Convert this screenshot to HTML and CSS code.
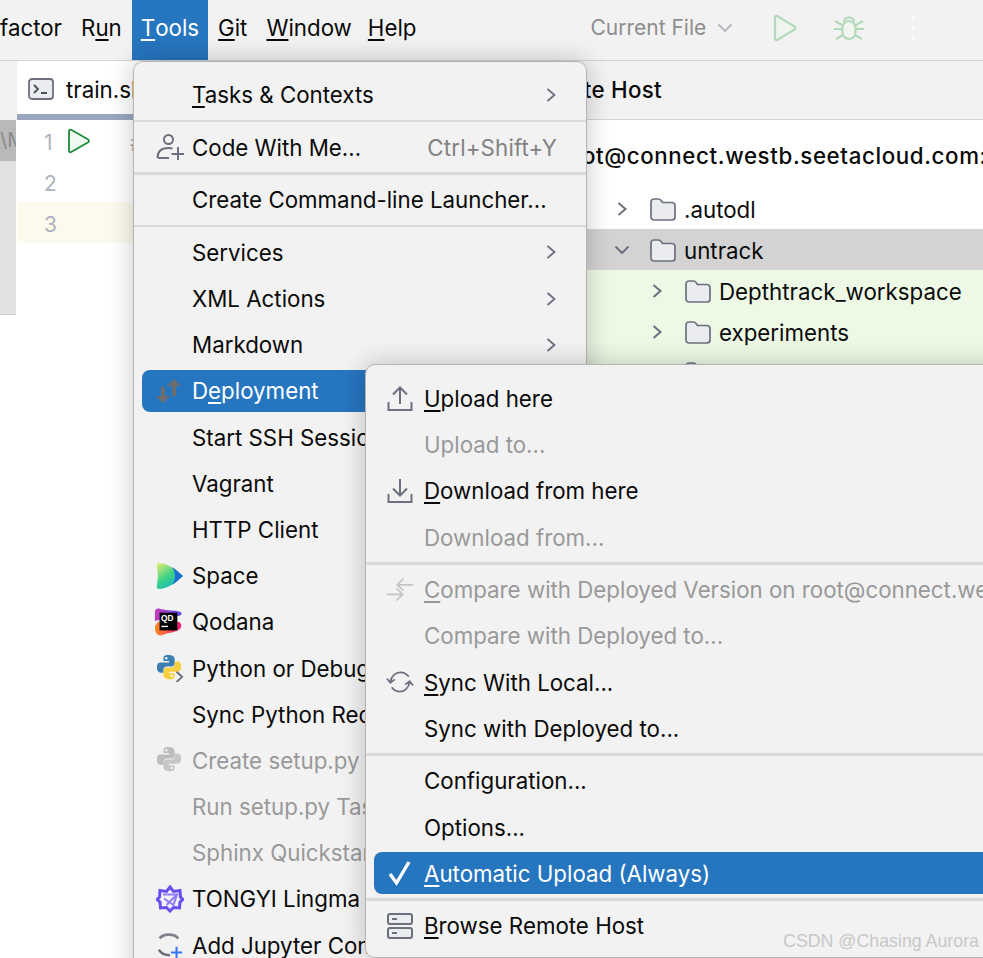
FILE: index.html
```html
<!DOCTYPE html>
<html lang="en">
<head>
<meta charset="utf-8">
<title>Tools menu</title>
<link rel="stylesheet" href="styles.css">
</head>
<body>
<div class="screen">
  <header class="menubar">
    <span class="mb-item mb-first">factor</span>
    <span class="mb-item">R<u>u</u>n</span>
    <span class="mb-item mb-active"><u>T</u>ools</span>
    <span class="mb-item mb-git"><u>G</u>it</span>
    <span class="mb-item"><u>W</u>indow</span>
    <span class="mb-item mb-help"><u>H</u>elp</span>
    <div class="toolbar">
      <span class="run-config">Current File</span>
      <svg class="tb-chev" viewBox="0 0 16 10"><path d="M1.500 1.500 8 8l6.500-6.500" fill="none" stroke="#b4b6bc" stroke-width="1.800"/></svg>
      <svg class="tb-run" viewBox="0 0 26 28"><path d="M3 3.500c0-1.500 1.300-2 2.500-1.300l17 10.300c1.200.8 1.200 2.200 0 3l-17 10.300c-1.200.7-2.500.2-2.500-1.300z" fill="#f0f6ee" stroke="#b3d9b9" stroke-width="2.200"/></svg>
      <svg class="tb-bug" viewBox="0 0 30 28"><g fill="none" stroke="#b3d9b9" stroke-width="2.200"><rect x="8.500" y="7" width="13" height="18" rx="6.500" fill="#f0f6ee"/><path d="M10 8c0-6 10-6 10 0M1 7l7 4M29 7l-7 4M0 15h8M30 15h-8M2 25l7-4M28 25l-7-4"/></g></svg>
      <svg class="tb-more" viewBox="0 0 6 26"><g fill="#fbfbfb"><circle cx="3" cy="3" r="2"/><circle cx="3" cy="13" r="2"/><circle cx="3" cy="23" r="2"/></g></svg>
    </div>
  </header>

  <main class="workspace">
    <aside class="stripe">
      <div class="stripe-top"></div>
      <div class="stripe-path">\M</div>
      <div class="stripe-body"></div>
    </aside>

    <section class="editor">
      <div class="tabbar">
        <div class="tab">
          <svg class="tab-icon" viewBox="0 0 26 22"><rect x="1" y="1" width="24" height="20" rx="3" fill="#ebecf0" stroke="#6c707e" stroke-width="1.800"/><path d="M6 7l4 4-4 4M13 15h6" fill="none" stroke="#4a4e5a" stroke-width="1.800"/></svg>
          <span>train.sh</span>
        </div>
      </div>
      <div class="code">
        <div class="line"><span class="ln">1</span><svg class="gutter-run" viewBox="0 0 24 26"><path d="M2 3c0-1.300 1.200-1.800 2.200-1.200l17 9.700c1 .6 1 2.200 0 2.800l-17 9.700C3.200 24.600 2 24.100 2 22.800z" fill="#effaf0" stroke="#208a3c" stroke-width="1.800"/></svg><span class="code-text">#</span></div>
        <div class="line"><span class="ln">2</span></div>
        <div class="line line-current"><span class="ln">3</span></div>
      </div>
    </section>

    <section class="remote">
      <div class="remote-title">Remote Host</div>
      <div class="remote-root">root@connect.westb.seetacloud.com:</div>
      <div class="tree">
        <div class="node">
          <svg class="chev" viewBox="0 0 12 16"><path d="M2.500 2l7 6-7 6" fill="none" stroke="#6c707e" stroke-width="2"/></svg>
          <svg class="folder" viewBox="0 0 26 24"><path d="M1 5a3 3 0 0 1 3-3h4.500c1.500 0 2 .8 2.800 1.800L12.500 5.500H22a3 3 0 0 1 3 3V20a3 3 0 0 1-3 3H4a3 3 0 0 1-3-3z" fill="#ebecf0" stroke="#6c707e" stroke-width="1.700"/></svg>
          <span>.autodl</span>
        </div>
        <div class="node node-selected">
          <svg class="chev" viewBox="0 0 16 12"><path d="M1.500 2.500l6.500 6.500 6.500-6.500" fill="none" stroke="#6c707e" stroke-width="2"/></svg>
          <svg class="folder" viewBox="0 0 26 24"><path d="M1 5a3 3 0 0 1 3-3h4.500c1.500 0 2 .8 2.800 1.800L12.500 5.500H22a3 3 0 0 1 3 3V20a3 3 0 0 1-3 3H4a3 3 0 0 1-3-3z" fill="#ebecf0" stroke="#6c707e" stroke-width="1.700"/></svg>
          <span>untrack</span>
        </div>
        <div class="node node-child">
          <svg class="chev" viewBox="0 0 12 16"><path d="M2.500 2l7 6-7 6" fill="none" stroke="#6c707e" stroke-width="2"/></svg>
          <svg class="folder" viewBox="0 0 26 24"><path d="M1 5a3 3 0 0 1 3-3h4.500c1.500 0 2 .8 2.800 1.800L12.500 5.500H22a3 3 0 0 1 3 3V20a3 3 0 0 1-3 3H4a3 3 0 0 1-3-3z" fill="#ebecf0" stroke="#6c707e" stroke-width="1.700"/></svg>
          <span>Depthtrack_workspace</span>
        </div>
        <div class="node node-child">
          <svg class="chev" viewBox="0 0 12 16"><path d="M2.500 2l7 6-7 6" fill="none" stroke="#6c707e" stroke-width="2"/></svg>
          <svg class="folder" viewBox="0 0 26 24"><path d="M1 5a3 3 0 0 1 3-3h4.500c1.500 0 2 .8 2.800 1.800L12.500 5.500H22a3 3 0 0 1 3 3V20a3 3 0 0 1-3 3H4a3 3 0 0 1-3-3z" fill="#ebecf0" stroke="#6c707e" stroke-width="1.700"/></svg>
          <span>experiments</span>
        </div>
        <div class="node node-child">
          <svg class="chev" viewBox="0 0 12 16"></svg>
          <svg class="folder" viewBox="0 0 26 24"><path d="M1 5a3 3 0 0 1 3-3h4.500c1.500 0 2 .8 2.800 1.800L12.500 5.500H22a3 3 0 0 1 3 3V20a3 3 0 0 1-3 3H4a3 3 0 0 1-3-3z" fill="#ebecf0" stroke="#6c707e" stroke-width="1.700"/></svg>
        </div>
      </div>
    </section>
  </main>

  <nav class="menu menu-main">
    <div class="row"><span class="ico"></span><span><u>T</u>asks &amp; Contexts</span><svg class="more" viewBox="0 0 12 16"><path d="M2.500 2l7 6-7 6" fill="none" stroke="#6c707e" stroke-width="1.800"/></svg></div>
    <div class="sep"></div>
    <div class="row"><span class="ico ico-in"><svg viewBox="0 0 28 28"><g fill="none" stroke="#6c707e" stroke-width="2"><circle cx="12.500" cy="6.500" r="4.500"/><path d="M1.500 25c0-6 3-10 11-10 1.500 0 3 .2 4 .6M2 25h11M22 14v13M15.500 21h12.500"/></g></svg></span><span>Code With Me...</span><span class="shortcut">Ctrl+Shift+Y</span></div>
    <div class="sep"></div>
    <div class="row"><span class="ico"></span><span>Create Command-line Launcher...</span></div>
    <div class="sep"></div>
    <div class="row"><span class="ico"></span><span>Services</span><svg class="more" viewBox="0 0 12 16"><path d="M2.500 2l7 6-7 6" fill="none" stroke="#6c707e" stroke-width="1.800"/></svg></div>
    <div class="row"><span class="ico"></span><span>XML Actions</span><svg class="more" viewBox="0 0 12 16"><path d="M2.500 2l7 6-7 6" fill="none" stroke="#6c707e" stroke-width="1.800"/></svg></div>
    <div class="row"><span class="ico"></span><span>Markdown</span><svg class="more" viewBox="0 0 12 16"><path d="M2.500 2l7 6-7 6" fill="none" stroke="#6c707e" stroke-width="1.800"/></svg></div>
    <div class="row row-sel"><span class="ico"><svg viewBox="0 0 28 28"><g fill="#6e6e6e"><path d="M7 10h4v9h5l-7 7-7-7h5z"/><path d="M18 2l7 7h-5v10h-4V9h-5z" transform="translate(2 0)"/></g></svg></span><span>D<u>e</u>ployment</span></div>
    <div class="row"><span class="ico"></span><span>Start SSH Session...</span></div>
    <div class="row"><span class="ico"></span><span>Vagrant</span></div>
    <div class="row"><span class="ico"></span><span>HTTP Client</span></div>
    <div class="row"><span class="ico ico-in"><svg viewBox="0 0 28 28"><defs><linearGradient id="sp" x1="0" y1="0" x2=".7" y2="1"><stop offset="0" stop-color="#e8ee70"/><stop offset=".55" stop-color="#39d08a"/><stop offset="1" stop-color="#12b5c9"/></linearGradient></defs><path d="M3 1c8 0 16 6 24 13-8 7-16 13-24 13-2 0-2.500-1-2-4 1-6 1-12 0-18-.5-3 0-4 2-4z" fill="url(#sp)"/><path d="M16 5c4 2.500 7.500 6 11 9-3.500 3-7 6.500-11 9 4-6 4-12 0-18z" fill="#1a6fd0"/></svg></span><span>Space</span></div>
    <div class="row"><span class="ico"><svg viewBox="0 0 30 30"><defs><linearGradient id="qa" x1="0" y1="0" x2="1" y2="0"><stop offset="0" stop-color="#c43ab8"/><stop offset="1" stop-color="#5b4de8"/></linearGradient><linearGradient id="qb" x1="0" y1="0" x2="1" y2="0"><stop offset="0" stop-color="#ff8a1f"/><stop offset="1" stop-color="#f0187f"/></linearGradient></defs><path d="M1 4c0-3 3-4 6-3 8 2 15 1 21 3 2 1 2 3 0 4L1 14z" fill="url(#qa)"/><path d="M1 22c0-4 2-7 6-8l20 1c3 2 3 6 0 8-6 4-12 3-18 6-5 2-8-3-8-7z" fill="url(#qb)"/><rect x="6" y="5" width="19" height="19" fill="#000"/><text class="qd" x="7.500" y="14">QD</text><rect x="8" y="19" width="7" height="1.500" fill="#fff"/></svg></span><span>Qodana</span></div>
    <div class="row"><span class="ico ico-in"><svg viewBox="0 0 30 30"><path d="M13 1C9 1 8 2.500 8 5v2.500h6V9H5c-3 0-4 2-4 5.500S2.500 20 5 20h3v-3c0-2 1.500-3.500 3.500-3.500h5c2 0 3.500-1.500 3.500-3.500V5c0-2.500-3-4-7-4z" fill="#3c7eb2"/><path d="M15 27c4 0 5-1.500 5-4v-2.500h-6V19h9c3 0 4-2 4-5.500S25.500 8 23 8h-3v3c0 2-1.500 3.500-3.500 3.500h-5C9.500 14.500 8 16 8 18v5c0 2.500 3 4 7 4z" fill="#f7cf3e"/><circle cx="11" cy="4.500" r="1.300" fill="#fff"/><circle cx="17" cy="23.500" r="1.300" fill="#fff"/><path d="M22 19l6 5.500-6 5.500" fill="none" stroke="#6c707e" stroke-width="2"/></svg></span><span>Python or Debug Console</span></div>
    <div class="row"><span class="ico"></span><span>Sync Python Requirements...</span></div>
    <div class="row row-off"><span class="ico ico-in"><svg viewBox="0 0 30 30"><path d="M13 1C9 1 8 2.500 8 5v2.500h6V9H5c-3 0-4 2-4 5.500S2.500 20 5 20h3v-3c0-2 1.500-3.500 3.500-3.500h5c2 0 3.500-1.500 3.500-3.500V5c0-2.500-3-4-7-4z" fill="#bdbdbd"/><path d="M15 27c4 0 5-1.500 5-4v-2.500h-6V19h9c3 0 4-2 4-5.500S25.500 8 23 8h-3v3c0 2-1.500 3.500-3.500 3.500h-5C9.500 14.500 8 16 8 18v5c0 2.500 3 4 7 4z" fill="#c6c6c6"/><circle cx="11" cy="4.500" r="1.300" fill="#f2f2f2"/><circle cx="17" cy="23.500" r="1.300" fill="#f2f2f2"/></svg></span><span>Create setup.py</span></div>
    <div class="row row-off"><span class="ico"></span><span>Run setup.py Task...</span></div>
    <div class="row row-off"><span class="ico"></span><span>Sphinx Quickstart</span></div>
    <div class="row"><span class="ico ico-in"><svg viewBox="0 0 28 28"><path d="M14 2l3.500 4.500 6.500-1 .5 6.500L27 14.500 24 17l-.5 6-6-.5-3.500 3.500-3.500-3.500-6 .5-.5-6L1 14.500 3.500 12 4 5.500l6.500 1z" fill="none" stroke="#6a4df0" stroke-width="3"/><path d="M7 9.500h14L10.500 20M21 9.500 17.500 20 8 13.500" fill="none" stroke="#8f7bff" stroke-width="2"/></svg></span><span>TONGYI Lingma</span></div>
    <div class="row"><span class="ico ico-in"><svg viewBox="0 0 30 30"><g fill="none" stroke-width="2.800"><path d="M4 8c3-5 15-6 20 0" stroke="#7d828e"/><path d="M3 20c3 5 8 6 12 6" stroke="#6c707e"/><path d="M22 17v12M16 23h12" stroke="#3574f0" stroke-width="2.200"/></g></svg></span><span>Add Jupyter Connection...</span></div>
  </nav>

  <nav class="menu menu-sub">
    <div class="row"><span class="ico"><svg viewBox="0 0 28 28"><g fill="none" stroke="#6c707e" stroke-width="2"><path d="M14 19V3M7 9.500 14 2.500l7 7M2.500 17v8h23v-8"/></g></svg></span><span><u>U</u>pload here</span></div>
    <div class="row row-off"><span class="ico"></span><span>Upload to...</span></div>
    <div class="row"><span class="ico"><svg viewBox="0 0 28 28"><g fill="none" stroke="#6c707e" stroke-width="2"><path d="M14 2v16M7 11.500l7 7 7-7M2.500 17v8h23v-8"/></g></svg></span><span><u>D</u>ownload from here</span></div>
    <div class="row row-off"><span class="ico"></span><span>Download from...</span></div>
    <div class="sep"></div>
    <div class="row row-off"><span class="ico"><svg viewBox="0 0 32 30"><g fill="none" stroke="#c4c4c8" stroke-width="2"><path d="M31 9H14M20 2l-7 7 7 7M1 20h17M12 13l7 7-7 7"/></g></svg></span><span><u>C</u>ompare with Deployed Version on root@connect.westb.seetacloud.com</span></div>
    <div class="row row-off"><span class="ico"></span><span>Compare with Deployed to...</span></div>
    <div class="row"><span class="ico"><svg viewBox="0 0 32 28"><g fill="none" stroke="#6c707e" stroke-width="2"><path d="M5 14C6 7 11 3 16.500 3c4 0 7 1.500 9.500 5M1 10l4 5 5-4M27 14c-1 7-6 11-11 11-4 0-7-1.500-9.500-5M31 18l-4-5-5 4"/></g></svg></span><span><u>S</u>ync With Local...</span></div>
    <div class="row"><span class="ico"></span><span>Sync with Deployed to...</span></div>
    <div class="sep"></div>
    <div class="row"><span class="ico"></span><span>Configuration...</span></div>
    <div class="row"><span class="ico"></span><span>Options...</span></div>
    <div class="row row-sel"><span class="ico"><svg viewBox="0 0 28 28"><path d="M4 15l6.500 9L23 3" fill="none" stroke="#fff" stroke-width="3.400"/></svg></span><span><u>A</u>utomatic Upload (Always)</span></div>
    <div class="sep"></div>
    <div class="row"><span class="ico"><svg viewBox="0 0 28 28"><g fill="none" stroke="#6c707e" stroke-width="2"><rect x="2" y="2" width="24" height="10" rx="2" fill="#ebecf0"/><rect x="2" y="16" width="24" height="10" rx="2" fill="#ebecf0"/><path d="M6 7h5M6 21h5"/></g></svg></span><span><u>B</u>rowse Remote Host</span></div>
  </nav>

  <div class="watermark">CSDN @Chasing Aurora</div>
</div>
</body>
</html>
```

FILE: styles.css
```css
* { box-sizing: border-box; }
html, body { margin: 0; padding: 0; background: #fff; }
body { font-family: Inter, "Liberation Sans", sans-serif; font-size: 22.300px; color: #0a0a0a; }
u { text-underline-offset: 3px; text-decoration-thickness: 1.500px; }

.screen { position: relative; width: 983px; height: 958px; overflow: hidden; background: #fff; }

/* Menu bar */
.menubar { display: flex; align-items: stretch; height: 61px; background: #f2f2f2; border-bottom: 1px solid #d4d4d4; }
.mb-item { display: flex; align-items: center; padding: 0 10px 5px; height: 60px; }
.mb-first { padding: 0 9px 5px 0; }
.mb-git { padding-right: 9px; }
.mb-help { margin-left: -4px; }
.mb-active { background: #2675bf; color: #fff; padding: 0 9px 5px; }
.toolbar { display: flex; align-items: center; padding-bottom: 5px; margin-left: 164px; }
.run-config { color: #8d8d8d; font-size: 21px; }
.tb-chev { width: 16px; height: 10px; margin-left: 11px; }
.tb-run { width: 26px; height: 28px; margin-left: 39px; }
.tb-bug { width: 30px; height: 28px; margin-left: 36px; }
.tb-more { width: 6px; height: 26px; margin-left: 46px; }

/* Workspace */
.workspace { display: flex; height: 897px; }
.stripe { width: 17px; display: flex; flex-direction: column; flex: none; }
.stripe-top { height: 59px; background: #f2f2f2; }
.stripe-path { height: 41px; background: #b9b9b9; color: #8a8a8a; font-size: 20px; line-height: 41px; overflow: hidden; white-space: nowrap; width: 16px; }
.stripe-body { height: 154px; width: 16px; background: #e2e2e2; border-bottom: 1px solid #d0d0d0; }

.editor { width: 483px; flex: none; }
.tabbar { height: 59px; background: #f2f2f2; }
.tab { display: flex; align-items: center; gap: 12px; height: 59px; padding: 3px 0 0 11px; background: #fff; width: 200px; border-bottom: 6px solid #9aa7bd; }
.tab-icon { width: 26px; height: 22px; }
.line { display: flex; align-items: center; height: 41px; padding-top: 3px; }
.line-current { background: #fcfaed; }
.ln { padding-left: 27px; box-sizing: content-box; width: 12px; color: #aeb3bd; font-size: 21px; }
.gutter-run { width: 24px; height: 26px; margin: -3px 0 0 11px; }
.code-text { margin-left: 39px; color: #9a9a9a; }

.remote { flex: 1; min-width: 0; overflow: hidden; }
.remote-title { height: 59px; display: flex; align-items: center; padding-left: 22px; padding-bottom: 2px; background: #f2f2f2; border-bottom: 1px solid #d4d4d4; font-weight: 500; letter-spacing: .3px; }
.remote-root { height: 41px; margin-top: 15px; display: flex; align-items: center; padding-left: 59px; font-weight: 500; white-space: nowrap; letter-spacing: .62px; }
.tree { margin-top: 12px; }
.node { display: flex; align-items: center; height: 41px; padding: 1px 0 0 114px; }
.node .chev { width: 16px; height: 16px; flex: none; }
.node .folder { width: 26px; height: 24px; margin: 0 8px 0 20px; flex: none; }
.node-selected { background: #d3d3d3; }
.node-child { background: #edf9e5; padding-left: 149px; }

/* Popup menus */
.menu { position: absolute; background: #f2f2f2; border: 1.500px solid #b4b4b4; border-radius: 10px; box-shadow: 0 0 26px rgba(0, 0, 0, .22); white-space: nowrap; overflow: hidden; }
.menu-main { left: 133px; top: 61px; width: 454px; height: 930px; padding-top: 9.500px; }
.menu-sub { left: 365px; top: 364px; width: 760px; height: 594px; padding-top: 10.500px; }
.row { display: flex; align-items: center; height: 46.200px; padding-left: 20px; }
.ico { width: 38px; flex: none; display: flex; align-items: center; }
.ico svg { width: 28px; height: 28px; display: block; }
.ico-in svg { margin-left: 2px; }
.more { width: 12px; height: 16px; margin-left: auto; margin-right: 29px; flex: none; }
.shortcut { margin-left: auto; margin-right: 29px; color: #828282; letter-spacing: .15px; }
.row-off { color: #999; }
.row-sel { height: 42px; margin: 2.100px 0 2.100px 8px; padding-left: 12px; background: #2675bf; border-radius: 8px; color: #fff; }
.sep { height: 6.400px; display: flex; align-items: center; }
.sep::before { content: ""; display: block; width: 100%; height: 2.500px; background: #d9d9d9; }
.menu-sub .row { padding-left: 20px; }
.menu-sub .row-sel { padding-left: 12px; }
.qd { font-family: "Liberation Sans", sans-serif; font-size: 9px; font-weight: 700; fill: #fff; }

.watermark { position: absolute; right: 4px; bottom: 6px; color: #c8c8c8; font-family: "Liberation Sans", sans-serif; font-size: 17.800px; }
```
